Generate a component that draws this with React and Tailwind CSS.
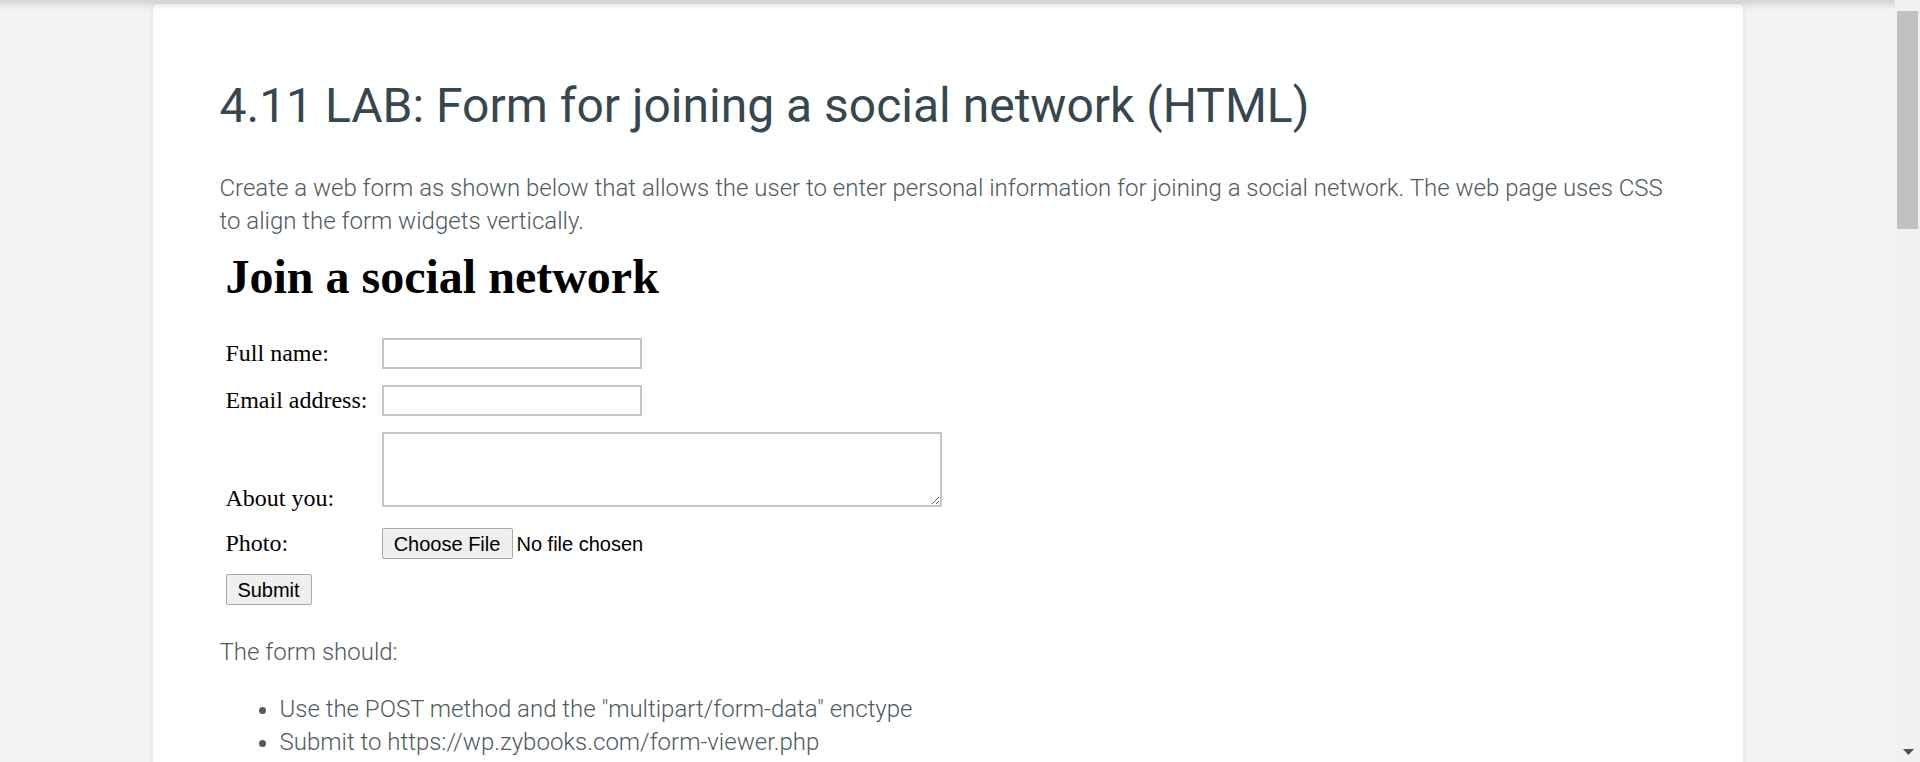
import React from "react";

export default function App() {
  return (
    <div className="flex h-[762px] w-[1920px] overflow-hidden bg-[#f3f3f3]">
      <div className="relative flex-1 overflow-hidden">
        <div className="pointer-events-none absolute inset-x-0 top-0 z-10 h-[10px] bg-gradient-to-b from-[rgba(0,0,0,0.13)] to-transparent" />
        <div className="mx-auto mt-[4px] h-[900px] w-[1590px] rounded-[3px] bg-white px-[67px] pt-[72px] shadow-[0_0_4px_rgba(0,0,0,0.12)]">
          <h1 className="font-['Roboto',sans-serif] text-[48px] font-normal leading-[60px] text-[#37474f]">
            4.11 LAB: Form for joining a social network (HTML)
          </h1>
          <p className="mt-[36px] font-['Roboto',sans-serif] text-[24px] font-light leading-[33px] text-[#4f5a61]">
            Create a web form as shown below that allows the user to enter personal information for joining a social network. The web page uses CSS to align the form widgets vertically.
          </p>

          <div className="mt-[11px] pl-[6px] font-['Liberation_Serif',serif] text-black">
            <h2 className="text-[48px] font-bold leading-[55px]">Join a social network</h2>

            <div className="mt-[34px] flex items-center">
              <label className="w-[156px] text-[24px] leading-[27px]">Full name:</label>
              <input readOnly className="h-[31px] w-[260px] border-2 border-[#c4c4c4] bg-white outline-none" />
            </div>

            <div className="mt-[16px] flex items-center">
              <label className="w-[156px] text-[24px] leading-[27px]">Email address:</label>
              <input readOnly className="h-[31px] w-[260px] border-2 border-[#c4c4c4] bg-white outline-none" />
            </div>

            <div className="mt-[16px] flex items-end">
              <label className="w-[156px] text-[24px] leading-[18px]">About you:</label>
              <textarea readOnly className="block h-[75px] w-[560px] border-2 border-[#c4c4c4] bg-white outline-none" />
            </div>

            <div className="mt-[21px] flex items-center">
              <label className="w-[156px] text-[24px] leading-[27px]">Photo:</label>
              <div className="flex items-center font-['Liberation_Sans',sans-serif] text-[20px]">
                <span className="flex h-[31px] w-[131px] items-center justify-center rounded-[2px] border-[1.5px] border-[#a9a9a9] bg-[#efefef] leading-none text-black">
                  Choose File
                </span>
                <span className="ml-[4px] leading-none text-black">No file chosen</span>
              </div>
            </div>

            <div className="mt-[15px] flex">
              <span className="flex h-[31px] w-[86px] items-center justify-center rounded-[2px] border-[1.5px] border-[#a9a9a9] bg-[#efefef] font-['Liberation_Sans',sans-serif] text-[20px] leading-none text-black">
                Submit
              </span>
            </div>
          </div>

          <p className="mt-[31px] font-['Roboto',sans-serif] text-[24px] font-light leading-[33px] text-[#4f5a61]">
            The form should:
          </p>
          <ul className="mt-[24px] list-disc pl-[60px] font-['Roboto',sans-serif] text-[24px] font-light leading-[33px] text-[#4f5a61]">
            <li>Use the POST method and the "multipart/form-data" enctype</li>
            <li>Submit to https://wp.zybooks.com/form-viewer.php</li>
          </ul>
        </div>
      </div>

      <div className="relative flex w-[25px] flex-col bg-[#f1f1f1]">
        <div className="mx-[2px] mt-[11px] h-[218px] bg-[#c1c1c1]" />
        <div className="flex-1" />
        <div className="mb-[7px] flex justify-center pl-[1px]">
          <svg width="11" height="6" viewBox="0 0 11 6">
            <polygon points="0,0 11,0 5.5,6" fill="#505050" />
          </svg>
        </div>
      </div>
    </div>
  );
}
